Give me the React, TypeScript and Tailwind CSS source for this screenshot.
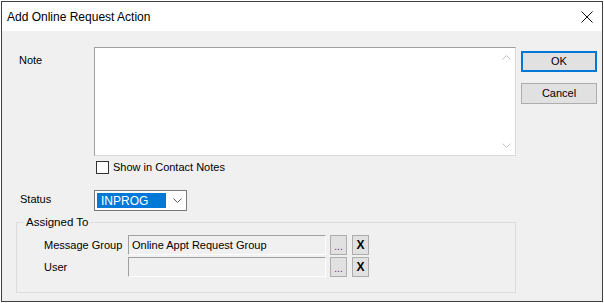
import React, { useState } from 'react';

const font = { fontFamily: '"Liberation Sans", Arial, sans-serif' };

const Chevron: React.FC<{ up?: boolean; className?: string }> = ({ up, className }) => (
  <svg width="9" height="6" viewBox="0 0 9 6" className={className}>
    <path d={up ? 'M0.5 5.5 L4.5 1.5 L8.5 5.5' : 'M0.5 0.5 L4.5 4.5 L8.5 0.5'} fill="none" stroke="currentColor" strokeWidth="1" />
  </svg>
);

const SmallButton: React.FC<{ children: React.ReactNode }> = ({ children }) => (
  <button className="w-[17px] h-[20px] bg-[#e1e1e1] border border-[#adadad] flex items-center justify-center leading-none">
    {children}
  </button>
);

const App: React.FC = () => {
  const [note, setNote] = useState('');
  const [showInNotes, setShowInNotes] = useState(false);

  return (
    <div className="w-[604px] h-[303px] bg-white p-px text-[11px] text-black" style={font}>
      <div className="w-full h-full border border-[#3f3f3f] flex flex-col">
        {/* title bar */}
        <div className="h-[29px] bg-white flex items-center justify-between pl-[5px] pr-[9px] shrink-0">
          <span className="text-[12px]">Add Online Request Action</span>
          <svg width="12" height="12" viewBox="0 0 12 12">
            <path d="M0.5 0.5 L11.5 11.5 M11.5 0.5 L0.5 11.5" stroke="#111" strokeWidth="1" />
          </svg>
        </div>

        {/* body */}
        <div className="flex-1 bg-[#f0f0f0] pl-[12px] pt-[16px] flex flex-col">
          <div className="flex">
            <div className="w-[80px] pl-[5px] pt-[5px]">Note</div>
            <div className="flex flex-col">
              <div className="w-[422px] h-[109px] bg-white border border-[#a0a0a0] border-r-[#d9d9d9] border-b-[#d9d9d9] flex">
                <textarea
                  className="flex-1 resize-none outline-none px-1 py-0.5 text-[11px]"
                  value={note}
                  onChange={(e) => setNote(e.target.value)}
                />
                <div className="w-[17px] flex flex-col justify-between items-center text-[#c2c2c2] py-[6px]">
                  <Chevron up />
                  <Chevron />
                </div>
              </div>
              <label className="flex items-center mt-[5px] ml-[2px] gap-[4px] h-[13px]">
                <input
                  type="checkbox"
                  checked={showInNotes}
                  onChange={(e) => setShowInNotes(e.target.checked)}
                  className="appearance-none w-[13px] h-[13px] bg-white border border-[#333]"
                />
                <span>Show in Contact Notes</span>
              </label>
            </div>
            <div className="flex flex-col ml-[5px] mt-[4px] gap-[11px]">
              <button className="w-[76px] h-[21px] bg-[#e1e1e1] border-2 border-[#0078d7] flex items-center justify-center">OK</button>
              <button className="w-[76px] h-[21px] bg-[#e1e1e1] border border-[#adadad] flex items-center justify-center">Cancel</button>
            </div>
          </div>

          <div className="flex items-center mt-[16px]">
            <div className="w-[80px] pl-[6px] pb-[3px]">Status</div>
            <div className="w-[93px] h-[21px] bg-white border border-[#7a7a7a] flex items-center pl-[2px]">
              <span className="w-[69px] h-[15px] bg-[#0078d7] text-white flex items-center pl-[4px] leading-none text-[12px]">INPROG</span>
              <Chevron className="ml-[7px] text-[#606060]" />
            </div>
          </div>

          <fieldset className="w-[500px] h-[77px] border border-[#dcdcdc] mt-[5px] ml-[2px]">
            <legend className="ml-[7px] px-[2px] leading-[13px] text-[11.5px]">Assigned To</legend>
            <div className="flex flex-col gap-[2px] mt-[6px] pl-[27px]">
              {[
                { label: 'Message Group', value: 'Online Appt Request Group' },
                { label: 'User', value: '' },
              ].map((row) => (
                <div key={row.label} className="flex items-center">
                  <div className="w-[84px] whitespace-nowrap">{row.label}</div>
                  <div className="w-[198px] h-[20px] bg-[#f0f0f0] border border-[#a0a0a0] border-r-white border-b-white flex items-center pl-[3px] whitespace-nowrap">
                    {row.value}
                  </div>
                  <div className="ml-[4px] flex gap-[5px]">
                    <SmallButton><span className="text-[#6a2c8a] text-[10px] mt-[4px]">...</span></SmallButton>
                    <SmallButton><span className="font-bold text-[12px]">X</span></SmallButton>
                  </div>
                </div>
              ))}
            </div>
          </fieldset>
        </div>
      </div>
    </div>
  );
};

export default App;
